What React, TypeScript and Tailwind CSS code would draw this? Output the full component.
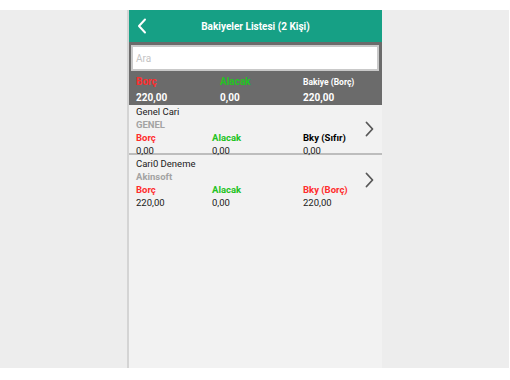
import React from 'react';

type Row = {
  name: string;
  group: string;
  borc: string;
  alacak: string;
  bkyLabel: string;
  bkyColor: string;
  bky: string;
};

const rows: Row[] = [
  { name: 'Genel Cari', group: 'GENEL', borc: '0,00', alacak: '0,00', bkyLabel: 'Bky (Sıfır)', bkyColor: 'text-black', bky: '0,00' },
  { name: 'Cari0 Deneme', group: 'Akinsoft', borc: '220,00', alacak: '0,00', bkyLabel: 'Bky (Borç)', bkyColor: 'text-[#ff2d2d]', bky: '220,00' },
];

const Chevron = () => (
  <svg width="9" height="16" viewBox="0 0 9 16" className="shrink-0">
    <polyline points="1.5,1.5 7.5,8 1.5,14.5" fill="none" stroke="#585858" strokeWidth="1.8" strokeLinecap="round" strokeLinejoin="round" />
  </svg>
);

const App: React.FC = () => {
  return (
    <div className="w-[510px] h-[380px] bg-white pt-[10px] font-['Roboto',sans-serif]">
      <div className="h-[358px] w-[509px] bg-[#ededed] flex pl-[127px]">
        <div className="w-[255px] h-full border-l-2 border-[#d4d4d4] bg-[#f2f2f2] flex flex-col">
          {/* header */}
          <div className="h-[32px] shrink-0 bg-[#16a085] flex items-center relative">
            <svg width="10" height="16" viewBox="0 0 10 16" className="absolute left-[8px] top-[8px]">
              <polyline points="8,1.5 2,8 8,14.5" fill="none" stroke="white" strokeWidth="2" strokeLinecap="round" strokeLinejoin="round" />
            </svg>
            <div className="w-full text-center text-white font-bold text-[10px]">Bakiyeler Listesi (2 Kişi)</div>
          </div>

          {/* search + totals */}
          <div className="h-[63px] shrink-0 bg-[#6b6b6b] pt-[3px] pl-[2px] pr-[3px]">
            <div className="h-[26px] bg-white border-2 border-[#c9c9c9] flex items-center pl-[3px]">
              <span className="text-[10px] text-[#c4c4c4]">Ara</span>
            </div>
            <div className="grid grid-cols-[84px_83px_1fr] pl-[5px] mt-[3px] leading-[16px] font-bold">
              <span className="text-[10px] text-[#ff2d2d]">Borç</span>
              <span className="text-[10px] text-[#22c322]">Alacak</span>
              <span className="text-[8.5px] text-white">Bakiye (Borç)</span>
              <span className="text-[10px] text-white">220,00</span>
              <span className="text-[10px] text-white">0,00</span>
              <span className="text-[10px] text-white">220,00</span>
            </div>
          </div>

          {/* list */}
          {rows.map((r, i) => (
            <div key={i} className={`h-[50px] shrink-0 flex items-center pl-[7px] pr-[8px] ${i === 0 ? 'border-b-2 border-[#bdbdbd]' : ''}`}>
              <div className={`flex-1 self-start text-[9.5px] leading-[13px] ${i === 0 ? 'pt-[0px]' : 'pt-[2px]'}`}>
                <div className="text-[#1a1a1a]">{r.name}</div>
                <div className="text-[#a3a3a3] font-bold">{r.group}</div>
                <div className="grid grid-cols-[76px_91px_1fr] font-bold">
                  <span className="text-[#ff2d2d]">Borç</span>
                  <span className="text-[#22c322]">Alacak</span>
                  <span className={r.bkyColor}>{r.bkyLabel}</span>
                </div>
                <div className="grid grid-cols-[76px_91px_1fr] text-[#1a1a1a]">
                  <span>{r.borc}</span>
                  <span>{r.alacak}</span>
                  <span>{r.bky}</span>
                </div>
              </div>
              <Chevron />
            </div>
          ))}
        </div>
      </div>
    </div>
  );
};

export default App;
